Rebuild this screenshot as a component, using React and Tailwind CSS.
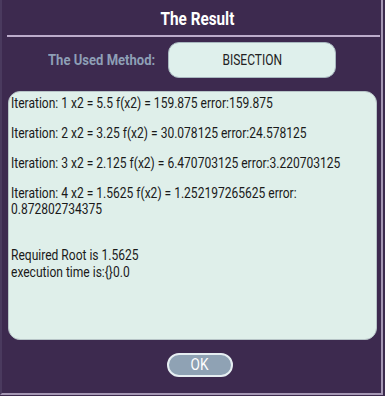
import React from "react";

const lines = [
  ["Iteration: 1 x2 = 5.5 f(x2) = 159.875 error:159.875", 15],
  ["", 15],
  ["Iteration: 2 x2 = 3.25 f(x2) = 30.078125 error:24.578125", 15],
  ["", 15],
  ["Iteration: 3 x2 = 2.125 f(x2) = 6.470703125 error:3.220703125", 15],
  ["", 15],
  ["Iteration: 4 x2 = 1.5625 f(x2) = 1.252197265625 error:", 16],
  ["0.872802734375", 16],
  ["", 15],
  ["", 15],
  ["Required Root is 1.5625", 17],
  ["execution time is:{}0.0", 17],
];

export default function App() {
  return (
    <div className="w-[385px] h-[396px] bg-[#3c2a4d] overflow-hidden">
      <div
        className="w-[383px] h-[395px] bg-[#3d2a4f] border-l-2 border-l-[#4a3a5e] border-r-2 border-r-[#a597b4] border-b-2 border-b-[#a597b4] flex flex-col"
        style={{ fontFamily: '"Roboto", "Liberation Sans", sans-serif' }}
      >
        <div className="h-[35px] flex items-center justify-center pl-[12px] text-white font-bold text-[18px] pt-[1px]">
          <span className="inline-block scale-x-[0.85]">The Result</span>
        </div>
        <div className="ml-[5px] mr-[1px] h-[2px] bg-[#bcaccb]" />
        <div className="flex items-center mt-[5px] h-[36px]">
          <div className="w-[166px] flex justify-end pr-[13px]">
            <span className="inline-block whitespace-nowrap origin-right scale-x-[0.87] text-[#8e9fb6] font-bold text-[15px]">
              The Used Method:
            </span>
          </div>
          <div className="w-[168px] h-[36px] rounded-[11px] bg-[#dff0ec] border border-[#a8b8bf] flex items-center justify-center text-[#222] text-[15px]">
            <span className="inline-block scale-x-[0.8]">BISECTION</span>
          </div>
        </div>
        <div className="mt-[13px] ml-[6px] w-[369px] h-[249px] rounded-[12px] bg-[#dfefea] border border-[#b7c4c7] pl-[2px] pt-[4px] text-[14px] text-[#1a1a1a]">
          {lines.map(([l, h], i) => (
            <div
              key={i}
              className="whitespace-nowrap origin-left scale-x-[0.86] leading-[15px]"
              style={{ height: h }}
            >
              {l}
            </div>
          ))}
        </div>
        <div className="flex justify-center mt-[13px]">
          <div className="ml-[16px] w-[66px] h-[24px] rounded-full bg-[#8fa2b4] border-2 border-[#e6eef2] flex items-center justify-center text-white text-[16px]">
            <span className="inline-block scale-x-[0.85]">OK</span>
          </div>
        </div>
      </div>
    </div>
  );
}
